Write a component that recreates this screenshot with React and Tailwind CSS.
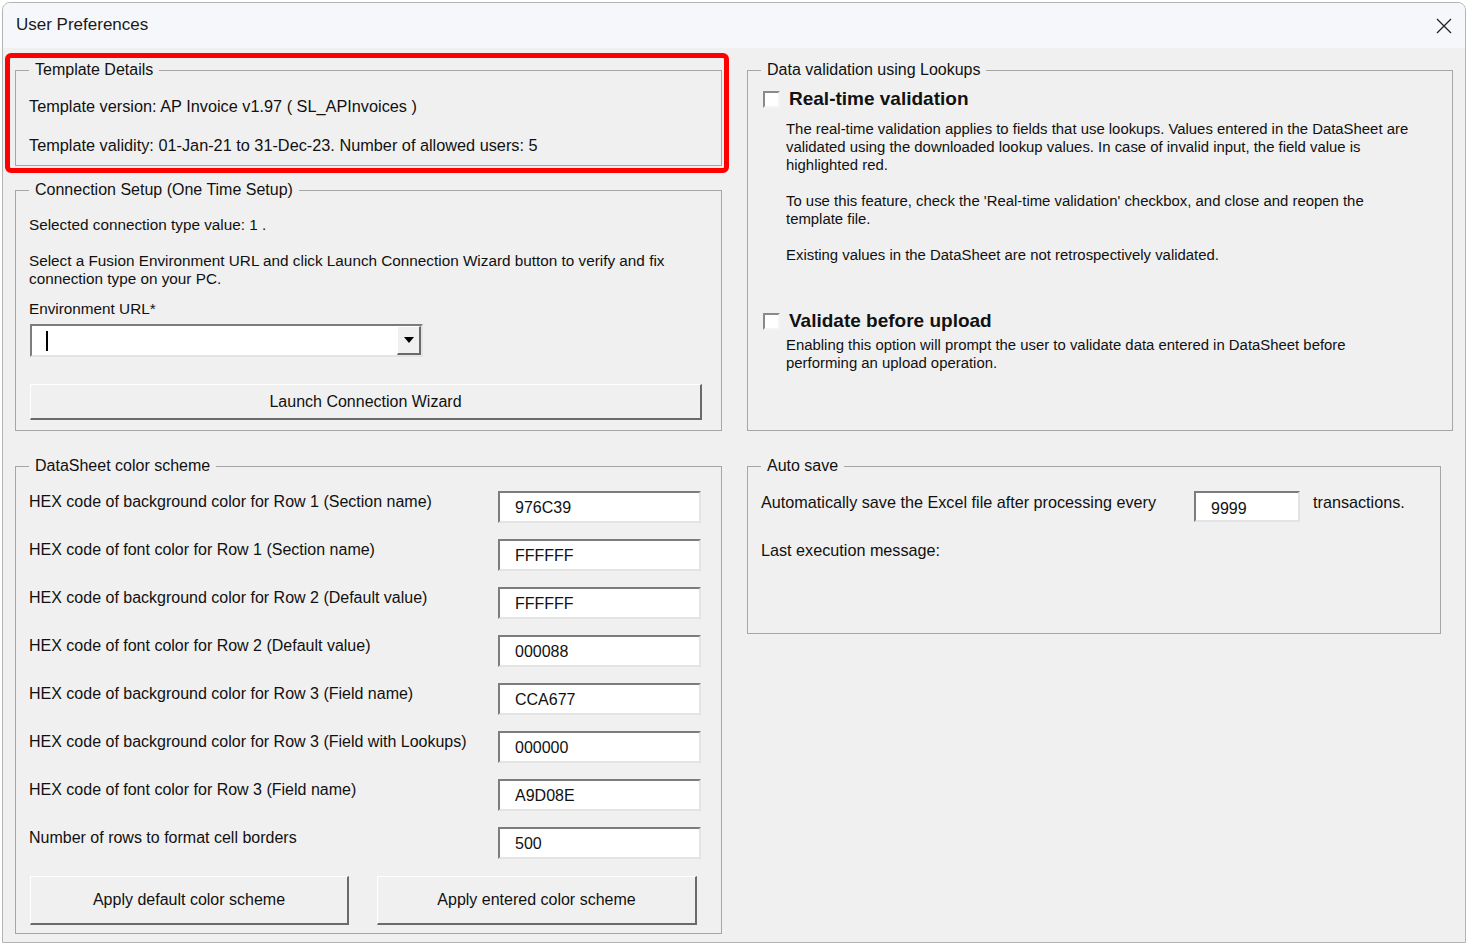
import React from 'react';

const sunken = 'border-2 border-t-[#7c7c7c] border-l-[#7c7c7c] border-r-[#e4e4e4] border-b-[#e4e4e4] bg-white';
const raised = 'border-t border-l border-t-white border-l-white border-r-2 border-b-2 border-r-[#6a6a6a] border-b-[#6a6a6a] bg-[#f0f0f0]';

const Group = ({ title, className, children }) => (
  <fieldset className={`border border-[#a6a6a6] px-[13px] ${className}`}>
    <legend className="px-[6px] text-[16px] leading-[20px]">{title}</legend>
    {children}
  </fieldset>
);

const Checkbox = () => (
  <span className="block w-[17px] h-[17px] shrink-0 border-2 border-t-[#8a8a8a] border-l-[#8a8a8a] border-r-[#f4f4f4] border-b-[#f4f4f4] bg-white" />
);

const colorRows = [
  ['HEX code of background color for Row 1 (Section name)', '976C39'],
  ['HEX code of font color for Row 1 (Section name)', 'FFFFFF'],
  ['HEX code of background color for Row 2 (Default value)', 'FFFFFF'],
  ['HEX code of font color for Row 2 (Default value)', '000088'],
  ['HEX code of background color for Row 3 (Field name)', 'CCA677'],
  ['HEX code of background color for Row 3 (Field with Lookups)', '000000'],
  ['HEX code of font color for Row 3 (Field name)', 'A9D08E'],
  ['Number of rows to format cell borders', '500'],
];

export default function App() {
  return (
    <div className="w-[1467px] h-[946px] bg-white overflow-hidden text-[#111] font-['Liberation_Sans',Arial,sans-serif]">
      <div className="ml-[2px] mt-[2px] w-[1464px] h-[941px] border border-[#b4b4b4] rounded-t-[8px] overflow-hidden bg-[#f0f0f0]">
        {/* title bar */}
        <div className="h-[45px] bg-[#f5f7fa] flex items-center justify-between pl-[13px] pr-[13px] pb-[1px]">
          <span className="text-[17px] text-[#1a1a1a]">User Preferences</span>
          <svg width="16" height="16" viewBox="0 0 16 16" className="mt-[1px]">
            <path d="M1 1 L15 15 M15 1 L1 15" stroke="#222" strokeWidth="1.3" />
          </svg>
        </div>

        <div className="flex pl-[12px] pt-[12px] gap-[25px]">
          {/* left column */}
          <div className="w-[707px] flex flex-col">
            <div className="relative">
              <Group title="Template Details" className="h-[106px]">
                <div className="mt-[16px] text-[16.3px] leading-[20px]">Template version: AP Invoice v1.97 ( SL_APInvoices )</div>
                <div className="mt-[19px] text-[16.3px] leading-[20px]">Template validity: 01-Jan-21 to 31-Dec-23. Number of allowed users: 5</div>
              </Group>
              <div className="absolute -left-[10px] -top-[7px] -right-[7px] -bottom-[7px] border-[5px] border-[#ff0000] rounded-[6px]" />
            </div>

            <Group title="Connection Setup (One Time Setup)" className="mt-[14px] h-[251px]">
              <div className="text-[15.3px] leading-[18px]">
                <p className="mt-[16px]">Selected connection type value: 1 .</p>
                <p className="mt-[18px]">
                  Select a Fusion Environment URL and click Launch Connection Wizard button to verify and fix
                  <br />
                  connection type on your PC.
                </p>
                <p className="mt-[12px]">Environment URL*</p>
              </div>
              <div className={`mt-[6px] ml-[1px] flex h-[33px] w-[393px] ${sunken}`}>
                <div className="flex-1 flex items-center pl-[14px]">
                  <span className="block h-[20px] w-[2px] bg-black" />
                </div>
                <div className={`w-[24px] h-full flex items-center justify-center ${raised}`}>
                  <svg width="10" height="6" viewBox="0 0 10 6">
                    <path d="M0 0 L10 0 L5 6 Z" fill="#000" />
                  </svg>
                </div>
              </div>
              <button className={`mt-[27px] ml-[1px] w-[672px] h-[36px] text-[16px] ${raised}`}>Launch Connection Wizard</button>
            </Group>

            <Group title="DataSheet color scheme" className="mt-[25px] h-[478px]">
              <div className="mt-[7px]">
                {colorRows.map(([label, value]) => (
                  <div key={label} className="h-[48px] flex items-start justify-between pr-[7px]">
                    <span className="mt-[9px] text-[16px] leading-[20px]">{label}</span>
                    <div className={`mt-[8px] w-[203px] h-[32px] flex items-center pl-[15px] text-[16px] ${sunken}`}>
                      <span className="mt-[2px]">{value}</span>
                    </div>
                  </div>
                ))}
              </div>
              <div className="mt-[9px] ml-[1px] flex gap-[28px]">
                <button className={`w-[319px] h-[49px] text-[16px] ${raised}`}>Apply default color scheme</button>
                <button className={`w-[320px] h-[49px] text-[16px] ${raised}`}>Apply entered color scheme</button>
              </div>
            </Group>
          </div>

          {/* right column */}
          <div className="w-[706px] flex flex-col">
            <Group title="Data validation using Lookups" className="h-[371px]">
              <div className="mt-[7px] ml-[2px] flex items-center gap-[9px] h-[24px]">
                <Checkbox />
                <span className="text-[19px] leading-[24px] font-bold">Real-time validation</span>
              </div>
              <div className="ml-[25px] text-[14.9px] leading-[18px]">
                <p className="mt-[9px]">
                  The real-time validation applies to fields that use lookups. Values entered in the DataSheet are
                  <br />
                  validated using the downloaded lookup values. In case of invalid input, the field value is
                  <br />
                  highlighted red.
                </p>
                <p className="mt-[18px]">
                  To use this feature, check the 'Real-time validation' checkbox, and close and reopen the
                  <br />
                  template file.
                </p>
                <p className="mt-[18px]">Existing values in the DataSheet are not retrospectively validated.</p>
              </div>
              <div className="mt-[45px] ml-[2px] flex items-center gap-[9px] h-[24px]">
                <Checkbox />
                <span className="text-[19px] leading-[24px] font-bold">Validate before upload</span>
              </div>
              <p className="mt-[3px] ml-[25px] text-[14.9px] leading-[18px]">
                Enabling this option will prompt the user to validate data entered in DataSheet before
                <br />
                performing an upload operation.
              </p>
            </Group>

            <Group title="Auto save" className="mt-[25px] w-[694px] h-[178px]">
              <div className="mt-[15px] flex items-start text-[16.2px] leading-[20px]">
                <span className="w-[433px] mt-[1px]">Automatically save the Excel file after processing every</span>
                <div className={`w-[106px] h-[31px] flex items-center pl-[15px] text-[16px] ${sunken}`}>
                  <span className="mt-[4px]">9999</span>
                </div>
                <span className="ml-[13px] mt-[1px]">transactions.</span>
              </div>
              <p className="mt-[18px] text-[16.2px] leading-[20px]">Last execution message:</p>
            </Group>
          </div>
        </div>
      </div>
    </div>
  );
}
